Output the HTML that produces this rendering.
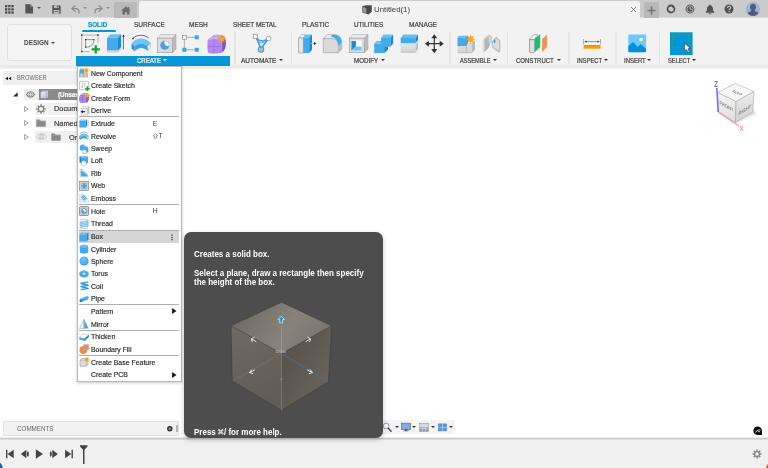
<!DOCTYPE html>
<html>
<head>
<meta charset="utf-8">
<title>Fusion</title>
<style>
*{box-sizing:border-box;margin:0;padding:0}
html,body{width:768px;height:468px;overflow:hidden;background:#fff}
body{font-family:"Liberation Sans",sans-serif;position:relative;color:#333}
#root{position:absolute;left:0;top:0;width:768px;height:468px;will-change:transform}
.abs{position:absolute}
svg{position:absolute;overflow:visible}
.t{position:absolute;white-space:nowrap;line-height:1;transform-origin:left top}
#topbar{left:0;top:0;width:768px;height:18px;background:#cbcbcb}
#hometab{left:114.200px;top:1.700px;width:22.800px;height:16.100px;background:#b9b9b9;border-radius:1.500px 1.500px 0 0}
#doctab{left:139px;top:1.300px;width:501.300px;height:17px;background:#f2f2f2;border-radius:3px 3px 0 0}
#plustab{left:643.500px;top:1.700px;width:15.300px;height:16.100px;background:#b9b9b9;border-radius:1.500px 1.500px 0 0}
#toolbar{left:0;top:17.500px;width:768px;height:48.500px;background:#f2f2f2}
#tbline{left:0;top:65.400px;width:768px;height:4.200px;background:linear-gradient(#ebebeb 0,#e8e8e8 45%,#fff 100%)}
.tab{-webkit-text-stroke:.2px;font-size:7px;color:#3c3c3c;top:21.1px;transform:scaleX(.93)}
.lbl{-webkit-text-stroke:.2px;font-size:6.7px;color:#3c3c3c;top:58px;transform:scaleX(.93)}
.dd{position:absolute;width:0;height:0;border-top:2.7px solid #333;border-left:2px solid transparent;border-right:2px solid transparent}
.vsep{position:absolute;top:32px;width:1.500px;height:31.800px;background:#e5e5e5}
#design{left:7px;top:24px;width:65px;height:37px;border:1px solid #e0e0e0;border-radius:3px;background:#f5f5f5}
#createbar{left:76.200px;top:55.600px;width:154px;height:10.300px;background:#0696d7}
#menu{left:77px;top:66.4px;width:104.6px;height:316px;background:#fff;border:1px solid #b9b9b9;box-shadow:0 1px 3px rgba(0,0,0,.22)}
.mi{-webkit-text-stroke:.18px;position:absolute;left:13.2px;font-size:7.3px;color:#2b2b2b;white-space:nowrap;line-height:1;transform:scaleX(.95);transform-origin:left top}
.ms{position:absolute;left:1px;width:100px;height:1px;background:#adadad}
.mk{position:absolute;font-size:6.8px;color:#3a3a3a;line-height:1}
.ic{left:.8px;width:10px;height:10px}
#tip{left:184px;top:232px;width:198.600px;height:206.300px;background:#4d4d4d;border-radius:7px;box-shadow:0 2px 5px rgba(0,0,0,.22)}
.tt{position:absolute;left:10px;font-size:8.500px;font-weight:bold;color:#fff;white-space:nowrap;line-height:1;transform:scaleX(.94);transform-origin:left top}
#bottombar{left:0;top:437.5px;width:768px;height:31px;background:#f1f1f1;border-top:1px solid #cfcfcf}
#comments{left:2.500px;top:421px;width:176.500px;height:14.5px;background:#f2f2f2;border:1px solid #e2e2e2}
#browserhdr{left:2.5px;top:69px;width:80px;height:16px;background:#f0f0f0}
.br{-webkit-text-stroke:.15px;position:absolute;font-size:6.9px;color:#333;white-space:nowrap;line-height:1}
</style>
</head>
<body><div id="root">
<!-- TOP BAR -->
<div class="abs" id="topbar"></div>
<div class="abs" style="left:0;top:17px;width:768px;height:1px;background:#dedede"></div>
<div class="abs" id="hometab"></div>
<div class="abs" id="doctab"></div>
<div class="abs" id="plustab"></div>
<!-- grid icon -->
<svg style="left:5px;top:5px" width="9" height="9" viewBox="0 0 9 9"><g fill="#4a4a4a"><rect x="0" y="0" width="2.3" height="2.3"/><rect x="3.2" y="0" width="2.3" height="2.3"/><rect x="6.4" y="0" width="2.3" height="2.3"/><rect x="0" y="3.2" width="2.3" height="2.3"/><rect x="3.2" y="3.2" width="2.3" height="2.3"/><rect x="6.4" y="3.2" width="2.3" height="2.3"/><rect x="0" y="6.4" width="2.3" height="2.3"/><rect x="3.2" y="6.4" width="2.3" height="2.3"/><rect x="6.4" y="6.4" width="2.3" height="2.3"/></g></svg>
<!-- file icon -->
<svg style="left:25px;top:4px" width="9" height="10" viewBox="0 0 9 10"><path d="M0.3 0.2h5l2.7 2.8v6.6H0.3z" fill="#555"/><path d="M5.3 0.2v2.8h2.7z" fill="#8a8a8a"/></svg>
<div class="dd" style="left:36.5px;top:7.2px;border-top-color:#555"></div>
<!-- save icon -->
<svg style="left:51.5px;top:4.8px" width="9" height="9" viewBox="0 0 9 9"><path d="M0.3 0.3h7.4l1 1v7.4H0.3z" fill="#555"/><rect x="2" y="0.3" width="4.6" height="2.6" fill="#c4c4c4"/><rect x="4.9" y="0.7" width="1" height="1.7" fill="#555"/><rect x="1.7" y="5" width="5.6" height="3.7" fill="#c4c4c4"/><rect x="2.6" y="6" width="3.8" height="0.8" fill="#555"/></svg>
<!-- undo -->
<svg style="left:70.5px;top:4.5px" width="10" height="9" viewBox="0 0 10 9"><path d="M4 0.8L1 3.6l3 2.6" fill="none" stroke="#8c8c8c" stroke-width="1.3" stroke-linejoin="round" stroke-linecap="round"/><path d="M1.3 3.6h3.5c2.2 0 3.5 1.6 3.2 4.2" fill="none" stroke="#8c8c8c" stroke-width="1.3" stroke-linecap="round"/></svg>
<div class="dd" style="left:83px;top:7.2px;border-top-color:#8c8c8c"></div>
<!-- redo -->
<svg style="left:93px;top:4.5px" width="10" height="9" viewBox="0 0 10 9"><path d="M6 0.8L9 3.6l-3 2.6" fill="none" stroke="#8c8c8c" stroke-width="1.3" stroke-linejoin="round" stroke-linecap="round"/><path d="M8.7 3.6H5.2c-2.2 0-3.5 1.6-3.2 4.2" fill="none" stroke="#8c8c8c" stroke-width="1.3" stroke-linecap="round"/></svg>
<div class="dd" style="left:105.8px;top:7.2px;border-top-color:#8c8c8c"></div>
<!-- home -->
<svg style="left:120.5px;top:5.5px" width="10" height="9" viewBox="0 0 10 9"><path d="M5 0.3L0.2 4.6h1.3v3.9h2.6V6h1.8v2.5h2.6V4.6h1.3z" fill="#6c6c6c"/><rect x="7" y="0.9" width="1.2" height="2.2" fill="#6c6c6c"/></svg>
<!-- doc cube + title -->
<svg style="left:361.5px;top:5.3px" width="10" height="10" viewBox="0 0 10 10"><path d="M0.3 1.2L3.6 0.2h6.2v6.5L6.5 9.5 0.3 7.6z" fill="#4a4a4a"/><path d="M0.9 2.1l3.3 0.9v5.2L0.9 7.1z" fill="#9a9a9a"/></svg>
<div class="t" style="left:373.8px;top:5.8px;font-size:7.6px;color:#3c3c3c;transform:scaleX(1.03)">Untitled(1)</div>
<!-- close x -->
<svg style="left:630px;top:6px" width="7" height="7" viewBox="0 0 7 7"><path d="M1 1l5 5M6 1L1 6" stroke="#666" stroke-width="0.8" fill="none"/></svg>
<!-- plus -->
<svg style="left:647px;top:5.5px" width="9" height="9" viewBox="0 0 9 9"><path d="M4.500 0.600v7.800M0.600 4.500h7.800" stroke="#757575" stroke-width="1.700" fill="none"/></svg>
<!-- extensions -->
<svg style="left:665.5px;top:4.3px" width="10" height="10" viewBox="0 0 10 10"><circle cx="5" cy="5" r="4.4" fill="#525252"/><circle cx="5" cy="5" r="2.6" fill="#cbcbcb"/><path d="M5.5 2.2L8 1.6l-0.8 2.6z" fill="#525252"/><path d="M4.5 7.8L2 8.4l0.8-2.6z" fill="#525252"/></svg>
<!-- clock -->
<svg style="left:685px;top:4.3px" width="10" height="10" viewBox="0 0 10 10"><circle cx="5" cy="5" r="4.4" fill="#525252"/><circle cx="5" cy="5" r="3.2" fill="none" stroke="#cbcbcb" stroke-width="0.8"/><path d="M5 3v2.2h1.8" stroke="#cbcbcb" stroke-width="0.9" fill="none"/></svg>
<!-- bell -->
<svg style="left:704.5px;top:4px" width="10" height="11" viewBox="0 0 10 11"><path d="M5 0.6c0.5 0 0.8 0.3 0.8 0.8 1.5 0.5 2.2 1.7 2.2 3.4 0 1.7 0.5 2.5 1.3 3.2v0.7H0.7V8c0.8-0.7 1.3-1.5 1.3-3.2 0-1.7 0.7-2.9 2.2-3.4 0-0.5 0.3-0.8 0.8-0.8z" fill="#525252"/><path d="M3.8 9.3h2.4c0 0.7-0.5 1.2-1.2 1.2s-1.2-0.5-1.2-1.2z" fill="#525252"/></svg>
<!-- help -->
<svg style="left:724px;top:4.3px" width="10" height="10" viewBox="0 0 10 10"><circle cx="5" cy="5" r="4.5" fill="#525252"/><path d="M3.5 3.9c0-1 0.7-1.6 1.6-1.6s1.6 0.6 1.6 1.4c0 1.2-1.6 1.2-1.6 2.4" fill="none" stroke="#cbcbcb" stroke-width="1.1"/><rect x="4.5" y="6.8" width="1.2" height="1.2" fill="#cbcbcb"/></svg>
<!-- avatar -->
<svg style="left:745.800px;top:1.700px" width="14" height="14" viewBox="0 0 14 14"><defs><clipPath id="avc"><circle cx="7" cy="7" r="6.900"/></clipPath><radialGradient id="avg" cx="0.5" cy="0.4" r="0.7"><stop offset="0" stop-color="#b4c6df"/><stop offset="1" stop-color="#8aa3c6"/></radialGradient></defs><circle cx="7" cy="7" r="6.900" fill="url(#avg)"/><g clip-path="url(#avc)" fill="#4a5f82"><path d="M7 1.800c1.900 0 3 1.300 3 3.300c0 1.300-.4 2.500-1.100 3.200v1c2.300.4 4 1.500 4.300 4.700H.8c.3-3.200 2-4.300 4.300-4.700v-1C4.400 7.600 4 6.400 4 5.100c0-2 1.100-3.300 3-3.300z"/></g></svg>
<!-- TOOLBAR -->
<div class="abs" id="toolbar"></div>
<div class="abs" id="tbline"></div>
<div class="abs" id="design"></div>
<div class="t" style="left:24.3px;top:40px;font-size:6.9px;font-weight:bold;color:#444;transform:scaleX(.93)">DESIGN</div>
<div class="dd" style="left:51.200px;top:41.500px;border-top-color:#444"></div>
<div class="t tab" style="left:88.3px;color:#0696d7;font-weight:bold;transform:scaleX(.9)">SOLID</div>
<div class="abs" style="left:81.7px;top:30.4px;width:34.2px;height:1.800px;background:#0696d7;border-radius:1px"></div>
<div class="t tab" style="left:134px">SURFACE</div>
<div class="t tab" style="left:189px">MESH</div>
<div class="t tab" style="left:232.5px;transform:scaleX(.91)">SHEET METAL</div>
<div class="t tab" style="left:302px">PLASTIC</div>
<div class="t tab" style="left:354.2px;transform:scaleX(.89)">UTILITIES</div>
<div class="t tab" style="left:409px">MANAGE</div>
<div class="abs" id="createbar"></div>
<div class="t lbl" style="left:137.3px;color:#fff;transform:scaleX(.9)">CREATE</div><div class="dd" style="left:162.6px;top:59px;border-top-color:#fff"></div>
<div class="t lbl" style="left:241px;transform:scaleX(.97)">AUTOMATE</div><div class="dd" style="left:278.5px;top:59px"></div>
<div class="t lbl" style="left:354.3px">MODIFY</div><div class="dd" style="left:380.5px;top:59px"></div>
<div class="t lbl" style="left:460px;transform:scaleX(.845)">ASSEMBLE</div><div class="dd" style="left:492.8px;top:59px"></div>
<div class="t lbl" style="left:515.8px;transform:scaleX(.9)">CONSTRUCT</div><div class="dd" style="left:556.5px;top:59px"></div>
<div class="t lbl" style="left:576.8px;transform:scaleX(.865)">INSPECT</div><div class="dd" style="left:604.3px;top:59px"></div>
<div class="t lbl" style="left:623.6px;transform:scaleX(.89)">INSERT</div><div class="dd" style="left:647px;top:59px"></div>
<div class="t lbl" style="left:667.7px;transform:scaleX(.855)">SELECT</div><div class="dd" style="left:692px;top:59px"></div>
<div class="vsep" style="left:234px"></div>
<div class="vsep" style="left:290.5px"></div>
<div class="vsep" style="left:449.3px"></div>
<div class="vsep" style="left:506.5px"></div>
<div class="vsep" style="left:568.3px"></div>
<div class="vsep" style="left:615px"></div>
<div class="vsep" style="left:658.5px"></div>
<!-- toolbar icons: one big svg overlay in page coordinates (offset 0,30) -->
<svg style="left:0;top:30px" width="768" height="28" viewBox="0 30 768 28">
<defs>
<radialGradient id="stargl" cx=".5" cy=".5" r=".5"><stop offset="0" stop-color="#ffb000"/><stop offset="1" stop-color="#ff8f00"/></radialGradient>
<linearGradient id="grayf" x1="0" y1="0" x2="0" y2="1"><stop offset="0" stop-color="#e3e3e3"/><stop offset="1" stop-color="#cfcfcf"/></linearGradient>
<linearGradient id="purp" x1="0" y1="0" x2="1" y2="1"><stop offset="0" stop-color="#c9a6f2"/><stop offset="1" stop-color="#8a4fd0"/></linearGradient>
</defs>
<!-- 1 create sketch -->
<g fill="none" stroke="#555" stroke-width=".7">
<path d="M81.7 35V51.6M81.7 35H98M98 35v8M81.7 51.6h8" stroke="#8a8a8a" stroke-width=".6"/>
<path d="M85.6 39.6H94M85.6 39.6v7.6M94 39.6c0 4.5-3.5 7.6-8.4 7.6" stroke="#666"/>
</g>
<g fill="#3a3a3a"><rect x="81" y="34.3" width="1.5" height="1.5"/><rect x="97.2" y="34.3" width="1.5" height="1.5"/><rect x="81" y="50.8" width="1.5" height="1.5"/><rect x="85" y="39" width="1.2" height="1.2"/><rect x="93.3" y="39" width="1.2" height="1.2"/><rect x="85" y="46.5" width="1.2" height="1.2"/></g>
<path d="M94.6 45.2h2.3v3h3v2.3h-3v3h-2.3v-3h-3v-2.3h3z" fill="#12a538"/>
<!-- 2 extrude -->
<path d="M106.5 50.3h11.6l3-3.2v2.3l-3 3.2H106.5z" fill="#d2d2d2"/>
<path d="M107 37.8h11v12.5h-11z" fill="#45aaea"/>
<path d="M107 37.8l3.5-3.5h10.6l-3.1 3.5z" fill="#62bff6"/>
<path d="M118 37.8l3.1-3.5v12.8l-3.1 3.2z" fill="#1b8ad4"/>
<path d="M123.450 36v13.500" stroke="#3a3a3a" stroke-width=".7"/><path d="M123.450 34.300l1.200 2.400h-2.400z" fill="#222"/>
<!-- 3 revolve -->
<path d="M133 38.2c4-3.8 11.5-3.8 15.5-.2" fill="none" stroke="#333" stroke-width=".7"/><path d="M131.8 39.2l2.3-.3-1.1-1.7z" fill="#222"/>
<path d="M131.7 43.3c3-3.6 6.2-4.8 9.3-4.8s6.800 1.200 9.200 4.300l-2.700 3.500c-2-1.900-4.100-2.700-6.500-2.700s-4.500 0.800-6.600 2.900z" fill="#6cc4fa"/>
<path d="M131.700 43.300l2.700 3.200v5l-2.700-3.200z" fill="#1f8dd6"/>
<path d="M134.400 46.500c2.100-2.100 4.200-2.900 6.600-2.900s4.500 0.800 6.500 2.700v4.400c-2-1.900-4.100-2.700-6.500-2.700s-4.500 1.200-6.600 3.500z" fill="#3aa2e6"/>
<path d="M147.500 46.300l2.700-3.500v4.800l-2.700 3.100z" fill="#fff" stroke="#8a8a8a" stroke-width=".6"/>
<!-- 4 hole -->
<path d="M157.400 38.200l3.300-3.600h15.300l-3.600 3.600z" fill="#e9e9e9" stroke="#9b9b9b" stroke-width=".5"/>
<path d="M172.400 38.200l3.600-3.600v14.400l-3.600 3.700z" fill="#bdbdbd" stroke="#9b9b9b" stroke-width=".5"/>
<rect x="157.400" y="38.200" width="15" height="14.500" fill="#dcdcdc" stroke="#9b9b9b" stroke-width=".6"/>
<circle cx="164.800" cy="45.300" r="4.800" fill="#b9b9b9"/>
<circle cx="164.800" cy="45.300" r="4.200" fill="#3da2e8"/>
<path d="M164.800 41.100a4.200 4.200 0 0 1 4.200 4.200c-1.200 1-2.600.8-3.600-.3c-1-1.100-1.400-2.500-.6-3.900z" fill="#fff"/>
<!-- 5 rect pattern -->
<path d="M184.300 37.300h12.500M184.300 37.300v12.500M184.300 49.800h12.500" fill="none" stroke="#777" stroke-width=".6"/>
<rect x="182.400" y="35.400" width="3.800" height="3.800" fill="#fff" stroke="#777" stroke-width=".6"/>
<rect x="194.800" y="35.300" width="4" height="4" fill="#3aa5e8"/>
<rect x="182.300" y="47.800" width="4" height="4" fill="#3aa5e8"/>
<rect x="194.800" y="47.800" width="4" height="4" fill="#3aa5e8"/>
<!-- 6 form -->
<path d="M209.500 39.500c1.500-3 4.500-4.700 8-4.700l5 .8c2.300 1.500 3.500 4 3.500 7.400c0 4.500-1.300 7.600-3.800 9.200l-1.700.8z" fill="#8451c8"/>
<path d="M209.500 39.500c1.500-3 4.500-4.700 8-4.700l5 .8l-2.200 3.400z" fill="#c9a8f4"/>
<rect x="207.500" y="38" width="13.800" height="15.500" rx="3.500" fill="#b389ee"/>
<path d="M208.500 39.800c2.500-1.600 8.500-1.800 11.500-.3" stroke="#dcc8fa" stroke-width=".9" fill="none"/>
<path d="M213.800 38.300v15M207.600 46.500h13.600" stroke="#9663d6" stroke-width=".6" fill="none"/>
<path d="M221.600 42c.3 3.500.3 7 0 10" stroke="#e6d8fb" stroke-width=".5" fill="none"/>
<g transform="translate(221.700 39.100)"><path d="M0-4.800L.9-2.100 3.400-3.400 2.100-.9 4.800 0 2.100.9 3.400 3.400.9 2.100 0 4.800-.9 2.100-3.400 3.400-2.100.9-4.800 0-2.100-.9-3.400-3.400-.9-2.100z" fill="#ff9a0a"/><circle r="2.500" fill="#ffa50e"/></g>
<!-- automate -->
<g fill="none" stroke="#3c9fdc" stroke-width="1.700" stroke-linecap="round"><path d="M256.200 37.500l4.300 9.800"/><path d="M267.300 40l-5.500 7.500"/><path d="M256.800 38.500c2.500 2.600 6.500 3 9.500 1.200"/><path d="M259.300 42.300h4.400" stroke-width=".9"/></g>
<rect x="253.200" y="34.200" width="4" height="4.300" fill="#fff" stroke="#777" stroke-width=".6"/>
<circle cx="268.600" cy="38.500" r="2.300" fill="#fff" stroke="#777" stroke-width=".6"/>
<circle cx="261" cy="49.600" r="2.700" fill="#cfcfcf" stroke="#3c9fdc" stroke-width="1.100"/>
<circle cx="261" cy="49.600" r="1.200" fill="none" stroke="#888" stroke-width=".5"/>
<!-- press pull -->
<path d="M298.700 38l3-3.400h3.800l-2.500 3.400z" fill="#f4f4f4" stroke="#8d8d8d" stroke-width=".5"/>
<rect x="298.700" y="38" width="4.500" height="15" fill="#e6e6e6" stroke="#8d8d8d" stroke-width=".6"/>
<path d="M303.200 37.800h6v15.300h-6z" fill="#45aaea"/>
<path d="M303.200 37.800l2.500-3.400h6.300l-2.800 3.400z" fill="#62bff6"/>
<path d="M309.200 37.800l2.800-3.400v15.300l-2.800 3.400z" fill="#1b8ad4"/>
<path d="M310.500 43.500h4" stroke="#bbb" stroke-width=".9"/><path d="M316.400 43.500l-2.300-1.400v2.800z" fill="#222"/>
<!-- fillet -->
<path d="M323.300 38.600l3.600-4h7c5 0 8 3.600 8 8v6.300l-3.600 3.800z" fill="#e9e9e9" stroke="#9b9b9b" stroke-width=".5"/>
<path d="M323.300 38.600h8.500c4 0 6.500 2.800 6.500 6.500v7.600h-15z" fill="#dadada" stroke="#9b9b9b" stroke-width=".6"/>
<path d="M338.300 45.100l3.600-2.500v6.300l-3.600 3.800z" fill="#bdbdbd"/>
<path d="M330.800 36.500c1-1.300 2-1.900 3.100-1.900c5 0 8 3.600 8 8l-3.600 3.200c0-4.500-2.800-8.300-7.500-9.300z" fill="#45aaea"/>
<!-- shell -->
<path d="M349.300 38.200l3.400-3.600h15.200l-3.500 3.600z" fill="#ededed" stroke="#9b9b9b" stroke-width=".5"/>
<path d="M364.400 38.200l3.500-3.600v14.500l-3.500 3.600z" fill="#bdbdbd" stroke="#9b9b9b" stroke-width=".5"/>
<rect x="349.300" y="38.200" width="15.100" height="14.500" fill="#dcdcdc" stroke="#9b9b9b" stroke-width=".6"/>
<rect x="351.400" y="40.600" width="10.200" height="10" fill="#fff"/>
<path d="M351.400 41h4.500v5.600l-4.500 4z" fill="#1b8ad4"/>
<path d="M355.900 46.600h5.700v4h-10.200z" fill="#6cc4fa"/>
<!-- combine -->
<path d="M381 38l2.500-3.400h9.600l-2.600 3.400z" fill="#62bff6"/>
<path d="M381 38h9.500v8.700H381z" fill="#45aaea"/>
<path d="M390.500 38l2.600-3.400v9l-2.600 3.100z" fill="#1b8ad4"/>
<path d="M374.200 43.600l2.300-2.600h5v2.600z" fill="#62bff6"/>
<path d="M374.200 43.600h10.400v9.500h-10.400z" fill="#45aaea"/>
<path d="M384.600 46.700h3.400l-3.400 6.400z" fill="#1b8ad4"/><path d="M384.600 46.700h3.400v2.800l-3.400 3.600z" fill="#1b8ad4"/>
<!-- split body -->
<path d="M400.700 38l2.500-3.400h14.800l-2.500 3.400z" fill="#62bff6"/>
<path d="M400.700 38h14.800v5.300h-14.800z" fill="#45aaea"/>
<path d="M415.500 38l2.500-3.400v5.300l-2.500 3.400z" fill="#1b8ad4"/>
<path d="M399.500 45l3-.0h13l3-3.800" fill="none" stroke="#8fd0fa" stroke-width=".8"/>
<path d="M400.700 45.700h14.800v6.600h-14.800z" fill="url(#grayf)"/>
<path d="M415.500 45.700l2.500-3.200v6.600l-2.500 3.200z" fill="#bdbdbd"/>
<path d="M400.700 52.300h14.800" stroke="#aaa" stroke-width=".5"/>
<!-- move -->
<g fill="#333"><path d="M434.300 34.200l3 4.100h-6z"/><path d="M434.300 53.200l3-4.100h-6z"/><path d="M424.900 43.700l4.100-3v6z"/><path d="M443.800 43.700l-4.100-3v6z"/></g>
<path d="M434.300 37.500v12.500M428 43.700h12.500" stroke="#333" stroke-width="1.200"/>
<!-- new component -->
<path d="M457.500 46h9v-3.300h6l2.500-2.400v9.500l-3 3H457.500z" fill="#d8d8d8"/>
<path d="M466.500 42.700h5.500l2.800-2.500h-5.800z" fill="#f0f0f0"/>
<path d="M472 42.700l3-2.400v9.500l-3 3z" fill="#bcbcbc"/>
<path d="M457.500 52.800h14.500M466.300 46v6.800" stroke="#9a9a9a" stroke-width=".5" fill="none"/>
<path d="M457.500 37.300h8.800v8.700h-8.800z" fill="#45aaea"/>
<path d="M457.500 37.300l1.700-1.600h8.600l-1.500 1.600z" fill="#62bff6"/>
<path d="M466.300 37.300l1.500-1.600v7l-1.500 3.300z" fill="#1b8ad4"/>
<g transform="translate(470.700 39.200)"><path d="M0-4.800L.9-2.100 3.400-3.400 2.100-.9 4.800 0 2.100.9 3.400 3.400.9 2.100 0 4.800-.9 2.100-3.400 3.400-2.100.9-4.800 0-2.100-.9-3.400-3.400-.9-2.100z" fill="#ff9a0a"/><circle r="2.300" fill="#ffab10"/></g>
<!-- joint -->
<path d="M483.200 40.200L488.500 35.300l3 .9v6.300l-3.300.7v4.800l-4 3.800-1-.6z" fill="#c6c6c6" stroke="#9a9a9a" stroke-width=".4"/>
<path d="M483.200 40.200l1.400.8v10.600l-1.400-.4z" fill="#e4e4e4"/>
<path d="M484.600 41l4.200-3.900v10.500l-4.200 4z" fill="#b4b4b4"/>
<path d="M488.500 35.300l3 .9v6.300l-2.700.6z" fill="#d4d4d4"/>
<rect x="488.500" y="43.300" width="1.500" height="2.800" fill="#7cc4f5"/>
<path d="M492.300 41.500L496 37l4 3.500v11l-1.200.7-6.500-4.700z" fill="#c9c9c9" stroke="#9a9a9a" stroke-width=".4"/>
<path d="M493.300 42.200l2.800-3.400 2.900 2.500v9l-5.700-3.900z" fill="#dedede"/>
<ellipse cx="494.600" cy="41.300" rx=".75" ry="2" fill="#2d8fe0"/>
<!-- construct -->
<path d="M529.500 39.600l4.500-5h3.500l-3 5z" fill="#f6f6f6" stroke="#777" stroke-width=".5"/>
<path d="M529.500 39.600h5v12.200c0 .6-.3.900-.9.900h-3.200c-.6 0-.9-.3-.9-.9z" fill="#dedede" stroke="#777" stroke-width=".6"/>
<path d="M534.900 38.600l5.300-4.300v12.600l-5.300 5.200z" fill="#10c272"/>
<path d="M542 39.200l5-4.800v12.600l-5 5.200z" fill="#f0935a"/>
<!-- inspect -->
<path d="M583.600 39v5.300M600.500 39v5.300" stroke="#888" stroke-width=".7"/>
<path d="M585.500 41.600h13" stroke="#555" stroke-width=".6"/>
<path d="M584.300 41.600l2.300-1.100v2.200zM599.800 41.600l-2.300-1.100v2.200z" fill="#444"/>
<rect x="583.600" y="45" width="17" height="3.700" fill="#f79d00"/>
<path d="M585.500 45v1.400M587.500 45v1M589.500 45v1.400M591.500 45v1M593.500 45v1.400M595.500 45v1M597.500 45v1.400M599.300 45v1" stroke="#c77400" stroke-width=".6"/>
<!-- insert -->
<rect x="628.300" y="34.400" width="17.800" height="17.800" rx="1.200" fill="#6bc9ff"/>
<path d="M628.300 52.200v-6l4.700-4.300 4.700 5 3-2.800 5.400 4.800v2.100c0 .7-.5 1.200-1.200 1.200h-15.400c-.7 0-1.200-.5-1.200-1.200z" fill="#0a8fd4"/>
<circle cx="641" cy="39.600" r="1.800" fill="#fdf7b2"/>
<!-- select -->
<rect x="670" y="32.300" width="22.600" height="22.800" fill="#0696d7"/>
<rect x="672.600" y="34.700" width="15.700" height="12.800" fill="none" stroke="#1db35c" stroke-width="1.100" stroke-dasharray="1.600 1.400"/>
<path d="M684.600 43.300v7.600l1.900-1.600 1.400 3.300 1.500-.7-1.400-3.200 2.500-.2z" fill="#fff" stroke="#333" stroke-width=".6" stroke-linejoin="round"/>
</svg>
<!-- BROWSER -->
<div class="abs" id="browserhdr" style="top:70.5px;height:14.8px"></div>
<svg style="left:5px;top:75.700px" width="7" height="5" viewBox="0 0 7 5"><path d="M3 0.700v3.600L0.200 2.500zM6.200 0.700v3.600L3.400 2.500z" fill="#222"/></svg>
<div class="t" style="left:17.3px;top:75.300px;font-size:6.6px;color:#6a6a6a;transform:scaleX(.87)">BROWSER</div>
<!-- row 1 -->
<div class="abs" style="left:23.500px;top:89px;width:15px;height:10.500px;background:#eeeeee"></div>
<div class="abs" style="left:38.500px;top:89px;width:45px;height:10.500px;background:#8b8b8b"></div>
<svg style="left:13px;top:92.200px" width="5" height="5" viewBox="0 0 5 5"><path d="M4.600 0.200v4.400H0.200z" fill="#222"/></svg>
<svg style="left:25.500px;top:91px" width="9" height="7" viewBox="0 0 9 7"><path d="M0.400 3.500C1.500 1.500 3 0.800 4.500 0.800S7.500 1.500 8.600 3.500C7.500 5.500 6 6.200 4.500 6.200S1.500 5.500 0.400 3.500z" fill="none" stroke="#808080" stroke-width="1.100"/><circle cx="4.500" cy="3.500" r="1.600" fill="none" stroke="#808080" stroke-width=".9"/></svg>
<svg style="left:40px;top:89.800px" width="9" height="9" viewBox="0 0 9 9"><defs><linearGradient id="cmpg" x1="0" y1="0" x2="1" y2="1"><stop offset="0" stop-color="#f4f6fa"/><stop offset="1" stop-color="#b4bccb"/></linearGradient></defs><path d="M1.800 1.200L3 0.300h5.300v6.300L7 8.500H1.200c-.5 0-.8-.3-.8-.8V2.200z" fill="#d5dae4" stroke="#6d7480" stroke-width=".5"/><rect x="0.700" y="1.800" width="6" height="6.500" rx=".8" fill="url(#cmpg)" stroke="#7d8490" stroke-width=".4"/></svg>
<div class="t br" style="left:58.200px;top:92.200px;color:#fff;font-weight:bold;transform:scaleX(.92)">(Unsaved)</div>
<!-- row 2 -->
<div class="abs" style="left:34.500px;top:103px;width:48px;height:11.500px;background:#f0f0f0"></div>
<svg style="left:24.300px;top:105.700px" width="5" height="6" viewBox="0 0 5 6"><path d="M0.600 0.500L4.200 3 0.600 5.500z" fill="#fff" stroke="#666" stroke-width=".6"/></svg>
<svg style="left:36px;top:104px" width="10" height="10" viewBox="0 0 10 10"><g transform="translate(5 5)"><g fill="#858585"><rect x="-0.750" y="-4.700" width="1.500" height="9.400"/><rect x="-0.750" y="-4.700" width="1.500" height="9.400" transform="rotate(45)"/><rect x="-0.750" y="-4.700" width="1.500" height="9.400" transform="rotate(90)"/><rect x="-0.750" y="-4.700" width="1.500" height="9.400" transform="rotate(135)"/></g><circle r="3.200" fill="#858585"/><circle r="2.100" fill="#f0f0f0"/></g></svg>
<div class="t br" style="left:54px;top:106.400px;transform:scaleX(1.07)">Document Settings</div>
<!-- row 3 -->
<div class="abs" style="left:34.500px;top:117px;width:48px;height:11.300px;background:#f3f3f3"></div>
<svg style="left:24.300px;top:119.700px" width="5" height="6" viewBox="0 0 5 6"><path d="M0.600 0.500L4.200 3 0.600 5.500z" fill="#fff" stroke="#666" stroke-width=".6"/></svg>
<svg style="left:36px;top:118.500px" width="10" height="8" viewBox="0 0 10 8"><path d="M0.300 0.500h3.400l.8 1.300h5.200v5.900H0.300z" fill="#8a8a8a"/><path d="M0.300 2.300h9.400" stroke="#a8a8a8" stroke-width=".5"/></svg>
<div class="t br" style="left:54px;top:120.700px;transform:scaleX(1.07)">Named Views</div>
<!-- row 4 -->
<div class="abs" style="left:34.500px;top:131px;width:48px;height:11.500px;background:#f0f0f0"></div>
<svg style="left:24.300px;top:133.600px" width="5" height="6" viewBox="0 0 5 6"><path d="M0.600 0.500L4.200 3 0.600 5.500z" fill="#fff" stroke="#666" stroke-width=".6"/></svg>
<svg style="left:35.500px;top:133.300px" width="11" height="7" viewBox="0 0 11 7"><path d="M0.500 3.500C1.800 1.500 3.500 0.800 5.500 0.800S9.200 1.500 10.500 3.500C9.200 5.500 7.500 6.200 5.500 6.200S1.800 5.500 0.500 3.500z" fill="none" stroke="#b3b3b3" stroke-width=".8"/><circle cx="5.500" cy="3.500" r="1.800" fill="none" stroke="#b3b3b3" stroke-width=".8"/><path d="M2.500 6.300l6-5.600" stroke="#c0c0c0" stroke-width=".6"/></svg>
<svg style="left:51px;top:132.500px" width="10" height="8" viewBox="0 0 10 8"><path d="M0.300 0.500h3.400l.8 1.300h5.200v5.900H0.300z" fill="#8a8a8a"/><path d="M0.300 2.300h9.400" stroke="#a8a8a8" stroke-width=".5"/></svg>
<div class="t br" style="left:68.500px;top:134.900px;transform:scaleX(1.07)">Origin</div>
<!-- COMMENTS / BOTTOM -->
<div class="abs" id="comments"></div>
<div class="t" style="left:16.900px;top:426.200px;font-size:6.6px;color:#666;transform:scaleX(.95)">COMMENTS</div>
<svg style="left:167px;top:426.200px" width="6" height="6" viewBox="0 0 6 6"><circle cx="2.800" cy="2.800" r="2.700" fill="#2b2b2b"/><path d="M2.800 1.200v3.200M1.200 2.800h3.200" stroke="#d8d8d8" stroke-width=".6"/></svg>
<div class="abs" style="left:176.200px;top:424.800px;width:1.400px;height:7.500px;background:#b5b5b5"></div>
<!-- nav bar -->
<div class="abs" style="left:380px;top:420.300px;width:75px;height:14px;background:#f4f4f4"></div>
<svg style="left:380px;top:420px" width="76" height="15" viewBox="380 420 76 15">
<circle cx="386.100" cy="426" r="2.900" fill="#eef3f8" stroke="#7d8791" stroke-width=".8"/>
<path d="M388.300 428.300l2.800 3" stroke="#3b3b3b" stroke-width="1.300" stroke-linecap="round"/>
<rect x="401.600" y="423.200" width="9" height="6.300" fill="#7eabe3" stroke="#6b6b6b" stroke-width=".7"/>
<path d="M405.200 429.600h1.800v1h-1.800zM403.500 430.800h5.200" stroke="#555" stroke-width=".7" fill="#555"/>
<rect x="419.700" y="423.200" width="8.800" height="8.200" fill="#c9d2e0" stroke="#8a8a8a" stroke-width=".5"/>
<path d="M419.700 427.300h8.800v4.100h-8.800z" fill="#8e9bb3"/>
<path d="M422.600 423.200v8.200M425.500 423.200v8.200M419.700 425.900h8.800M419.700 428.600h8.800" stroke="#f1f1f1" stroke-width=".5"/>
<rect x="438.400" y="423.900" width="8.200" height="7" fill="#5d96dc" stroke="#3f78c4" stroke-width=".5"/>
<path d="M442.500 423.900v7M438.400 427.400h8.200" stroke="#cfe0f5" stroke-width=".6"/>
</svg>
<div class="dd" style="left:394.500px;top:426.200px"></div>
<div class="dd" style="left:412.300px;top:426.200px"></div>
<div class="dd" style="left:430.500px;top:426.200px"></div>
<div class="dd" style="left:448.800px;top:426.200px"></div>
<!-- bottom bar -->
<div class="abs" style="left:0;top:437.300px;width:768px;height:2.700px;background:linear-gradient(#fff 0,#cdcdcd 45%,#c9c9c9 65%,#f0f0f0 100%)"></div>
<div class="abs" id="bottombar" style="top:440px;border-top:none;height:28px;background:#f0f0f0"></div>
<svg style="left:0;top:440px" width="100" height="28" viewBox="0 440 100 28">
<g fill="#444">
<path d="M6 449.800h1.400v8.400H6zM13.700 449.800v8.400L7.600 454z"/>
<path d="M26.400 449.800v8.400L20.800 454z"/><ellipse cx="27.900" cy="454" rx="1" ry="2.700"/>
<path d="M35.800 449.200v9.600L43 454z"/>
<path d="M52.300 449.800v8.400L57.900 454z"/><ellipse cx="50.800" cy="454" rx="1" ry="2.700"/>
<path d="M72.900 449.800h-1.400v8.400h1.400zM65.100 449.800v8.400l6.100-4.200z"/>
<path d="M80 445.300h7.500v1.300l-3 3.200v14.300h-1.500v-14.300l-3-3.200z"/>
</g>
</svg>
<!-- corner bits -->
<svg style="left:0;top:460px" width="5" height="8" viewBox="0 0 5 8"><path d="M0 2.500C1.300 4 2.500 6 2.800 8H0z" fill="#1d5fa6"/></svg>
<svg style="left:763px;top:460px" width="5" height="8" viewBox="0 0 5 8"><path d="M5 4C4 5 3.200 6.500 3 8h2z" fill="#d2601f"/></svg>
<!-- gear -->
<svg style="left:751.700px;top:449.100px" width="10" height="10" viewBox="0 0 10 10"><g transform="translate(5 5)"><g fill="#8a8a8a"><rect x="-0.800" y="-4.500" width="1.600" height="9"/><rect x="-0.800" y="-4.500" width="1.600" height="9" transform="rotate(45)"/><rect x="-0.800" y="-4.500" width="1.600" height="9" transform="rotate(90)"/><rect x="-0.800" y="-4.500" width="1.600" height="9" transform="rotate(135)"/></g><circle r="3.100" fill="#8a8a8a"/><circle r="1.700" fill="#f0f0f0"/></g></svg>
<!-- autodesk-ish badge -->
<svg style="left:752.500px;top:425.500px" width="10" height="10" viewBox="0 0 10 10"><path d="M4.500 0.500C7 0.500 9 2.400 9 4.800V9H4.500C2 9 0.300 7.100 0.300 4.800S2 0.500 4.500 0.500z" fill="#0a0a0a"/><path d="M2.300 6.300L5 4h2.500M4.800 5.700H7" stroke="#fff" stroke-width=".8" fill="none"/></svg>
<!-- viewcube -->
<svg style="left:700px;top:70px" width="68" height="60" viewBox="700 70 68 60">
<defs><linearGradient id="vcf" x1="0" y1="0" x2="0" y2="1"><stop offset="0" stop-color="#f4f4f4"/><stop offset="1" stop-color="#dedede"/></linearGradient>
<linearGradient id="vcr" x1="0" y1="0" x2="0" y2="1"><stop offset="0" stop-color="#ececec"/><stop offset="1" stop-color="#d2d2d2"/></linearGradient>
<filter id="vblur"><feGaussianBlur stdDeviation="1.200"/></filter></defs>
<path d="M716 110l19 13 21-9-4-6z" fill="#b5b5b5" opacity=".5" filter="url(#vblur)"/>
<path d="M717.500 92.500L735.500 83.500 754 91.500 736 101.500z" fill="#f7f7f7" stroke="#9c9c9c" stroke-width=".5"/>
<path d="M717.500 92.500L736 101.500 735.500 122.500 718.300 111.500z" fill="url(#vcf)" stroke="#9c9c9c" stroke-width=".5"/>
<path d="M736 101.500L754 91.500 752.800 112 735.500 122.500z" fill="url(#vcr)" stroke="#9c9c9c" stroke-width=".5"/>
<path d="M716.800 88L718.200 112" stroke="#7476f0" stroke-width="1.600"/>
<path d="M718.500 112.200L739 126" stroke="#f29a9a" stroke-width="1.200"/>
<text transform="translate(739.500 130.900) scale(.8 1)" font-family="Liberation Sans, sans-serif" font-size="7.400" font-weight="bold" fill="#f28d8d">X</text>
<text transform="translate(714 86.900) scale(.78 1)" font-family="Liberation Sans, sans-serif" font-size="8.600" font-weight="bold" fill="#7a7cf2">Z</text>
<text transform="matrix(.88 .38 -.75 .4 730.500 91.500)" font-family="Liberation Sans, sans-serif" font-size="5.300" fill="#5a5a5a">TOP</text>
<text transform="matrix(.82 .46 0 1 719.500 104)" font-family="Liberation Sans, sans-serif" font-size="5" fill="#5a5a5a">FRONT</text>
<text transform="matrix(.82 -.5 0 1 738.500 115.500)" font-family="Liberation Sans, sans-serif" font-size="5" fill="#5a5a5a">RIGHT</text>
</svg>
<!-- MENU -->
<div class="abs" id="menu">
<svg class="ic" style="top:1.1px" viewBox="0 0 10 10"><rect x="0.500" y="5" width="8" height="4" fill="#d2d2d2" stroke="#8a8a8a" stroke-width=".5"/><path d="M4.500 5v4M0.500 7h8" stroke="#9a9a9a" stroke-width=".4"/><rect x="4.800" y="3.300" width="3.700" height="1.700" fill="#e6e6e6"/><rect x="0.500" y="1.200" width="4.500" height="4" fill="#45aaea"/><path d="M0.500 1.200l.8-.7h4.500l-.8.700z" fill="#62bff6"/><g transform="translate(7.3 2.5) scale(1.2)"><path d="M0-2.600L.5-1.200 1.800-1.800 1.200-.5 2.600 0 1.200.5 1.800 1.800.5 1.200 0 2.600-.5 1.200-1.800 1.800-1.200.5-2.600 0-1.200-.5-1.800-1.800-.5-1.200z" fill="#ff9a0a"/><circle r="1.400" fill="#ffa50e"/></g></svg>
<div class="mi" style="top:2.3px">New Component</div>
<svg class="ic" style="top:13.6px" viewBox="0 0 10 10"><path d="M0.500 0.400h9.200v8.400h-9.200z" fill="#fcfcfc" stroke="#8c8c8c" stroke-width=".6" stroke-dasharray="2 .5"/><path d="M3.200 2.600h3M3.200 2.600v3.600M6.200 2.600c0 2-1.200 3.600-3 3.600" stroke="#777" stroke-width=".5" fill="none" stroke-dasharray=".9 .5"/><path d="M7.600 5.300h1.600v1.600h1.600v1.600H9.200v1.600H7.600V8.500H6V6.900h1.600z" fill="#16a83e"/></svg>
<div class="mi" style="top:14.8px">Create Sketch</div>
<svg class="ic" style="top:26.0px" viewBox="0 0 10 10"><g transform="translate(-.2 -.3) scale(1.07)"><path d="M1.200 2.600c.8-1.500 2.500-2.200 4.500-2.200l2.300.5c1 .8 1.500 2 1.500 3.600c0 2.300-.6 3.800-1.800 4.600L6.800 9.500z" fill="#8a55cc"/><path d="M1.200 2.600c.8-1.500 2.500-2.200 4.500-2.200l2.300.5L6.800 2.500z" fill="#c3a0f2"/><rect x="0.300" y="2.300" width="6.700" height="7.300" rx="1.800" fill="#ae80ea"/><path d="M3.600 2.300v7.300M0.300 6h6.700" stroke="#9966d8" stroke-width=".4"/></g><g transform="translate(8 2.4) scale(1.2)"><path d="M0-2.600L.5-1.200 1.800-1.800 1.200-.5 2.600 0 1.200.5 1.800 1.800.5 1.200 0 2.600-.5 1.200-1.800 1.800-1.200.5-2.600 0-1.200-.5-1.800-1.800-.5-1.200z" fill="#ff9a0a"/><circle r="1.400" fill="#ffa50e"/></g></svg>
<div class="mi" style="top:27.2px">Create Form</div>
<svg class="ic" style="top:38.5px" viewBox="0 0 10 10"><path d="M2 2.800l1.800-2h6.300l-1.500 2z" fill="#fafafa" stroke="#a5a5a5" stroke-width=".4"/><path d="M8.600 2.800l1.500-2v6.200l-1.500 2.200z" fill="#c4c4c4" stroke="#a5a5a5" stroke-width=".4"/><rect x="2" y="2.800" width="6.600" height="6.400" fill="#efefef" stroke="#a5a5a5" stroke-width=".4"/><path d="M3.500 5.700h2.600" stroke="#111" stroke-width="1"/><path d="M1.600 5.700l2.300-1.500v3z" fill="#111"/></svg>
<div class="mi" style="top:39.8px">Derive</div>
<div class="ms" style="top:49.1px"></div>
<svg class="ic" style="top:51.3px" viewBox="0 0 10 10"><path d="M0.400 8.300h6.400l1.200-1.200v1l-1.200 1.200H0.400z" fill="#cfcfcf"/><rect x="0.400" y="1.600" width="6.400" height="6.700" fill="#45aaea"/><path d="M0.400 1.600l1.300-1.200h6.300l-1.200 1.200z" fill="#62bff6"/><path d="M6.800 1.600l1.200-1.200v6.700l-1.200 1.200z" fill="#1b8ad4"/><path d="M9 1.200v6" stroke="#444" stroke-width=".4"/></svg>
<div class="mi" style="top:52.5px">Extrude</div>
<div class="mk" style="left:74.800px;top:53.7px">E</div>
<svg class="ic" style="top:63.8px" viewBox="0 0 10 10"><path d="M1.200 2.300c2-1.700 5.700-1.700 7.500 0" fill="none" stroke="#444" stroke-width=".4"/><path d="M0.300 4.800c1.500-1.700 3-2.300 4.600-2.300s3.300.6 4.600 2.200l-1.300 1.800c-1-1-2.100-1.400-3.300-1.400s-2.300.4-3.300 1.500z" fill="#6cc4fa"/><path d="M0.300 4.800l1.300 1.800v2.500l-1.300-1.700z" fill="#1b8ad4"/><path d="M1.600 6.600c1-1.100 2.100-1.500 3.300-1.500s2.300.4 3.300 1.400v2.200c-1-1-2.100-1.400-3.300-1.400s-2.300.6-3.300 1.800z" fill="#3aa2e6"/><path d="M8.200 6.500l1.300-1.800v2.400l-1.300 1.600z" fill="#f4f4f4" stroke="#999" stroke-width=".4"/></svg>
<div class="mi" style="top:66.0px">Revolve</div>
<svg style="left:75.300px;top:66.1px" width="5" height="6" viewBox="0 0 5 6"><path d="M2.500.400L4.700 2.900H3.500v2.300h-2V2.900H.3z" fill="none" stroke="#444" stroke-width=".5"/></svg><div class="mk" style="left:80.600px;top:65.8px">T</div>
<svg class="ic" style="top:76.2px" viewBox="0 0 10 10"><path d="M0.800 3.200c0-1.700 1.300-2.600 2.700-2.600c1.500 0 2.300.8 2.600 1.800c1.700-.3 3.200.7 3.300 2.500v3.500H6.800V5.800c-1 .3-2.300.2-3-.2c-.4 1-1.300 1.300-2.100 1C.900 6.300.800 5 .800 3.200z" fill="#45aaea"/><path d="M0.800 3.200c.8-1 2-1.400 3.300-1c1.200.4 1.700 1.500 2 2.500" stroke="#62bff6" stroke-width=".8" fill="none"/><rect x="3.800" y="6" width="3.600" height="3.600" fill="#f4f4f4" stroke="#8f8f8f" stroke-width=".5"/></svg>
<div class="mi" style="top:77.4px">Sweep</div>
<svg class="ic" style="top:88.6px" viewBox="0 0 10 10"><path d="M0.500 0.500h8.500v6l-1.500 1.500H2z" fill="#45aaea"/><path d="M0.500 0.500l1.800 1.500h5l1.700-1.500z" fill="#62bff6"/><path d="M0.500 0.500l1.800 1.500v5L.5 6.500z" fill="#1b8ad4"/><circle cx="4.700" cy="7.300" r="2.500" fill="#f6f6f6" stroke="#999" stroke-width=".4"/></svg>
<div class="mi" style="top:89.8px">Loft</div>
<svg class="ic" style="top:101.0px" viewBox="0 0 10 10"><path d="M1.200 9V2.500L2.500.8" fill="none" stroke="#9a9a9a" stroke-width=".6"/><path d="M1.500 8.800h7.800" stroke="#aaa" stroke-width=".6"/><path d="M2 8.300V2.200c2.500 1.200 5.500 3.500 7 6.100z" fill="#45aaea"/><path d="M2 2.200l.8-1c2.500 1.200 5 3.500 6.200 7.100" fill="none" stroke="#62bff6" stroke-width=".7"/></svg>
<div class="mi" style="top:102.2px">Rib</div>
<svg class="ic" style="top:113.2px" viewBox="0 0 10 10"><rect x="0.500" y="0.500" width="9" height="9" fill="#e2e2e2" stroke="#6f6f6f" stroke-width=".6"/><rect x="2" y="2" width="6" height="6" fill="#c9c9c9" stroke="#8a8a8a" stroke-width=".4"/><path d="M4.300 2h1.500v2.300h2.200v1.500H5.800v2.200H4.300V5.800H2V4.300h2.300z" fill="#45aaea"/><path d="M5.800 2v6" stroke="#1b8ad4" stroke-width=".5"/></svg>
<div class="mi" style="top:114.4px">Web</div>
<svg class="ic" style="top:125.7px" viewBox="0 0 10 10"><path d="M0.500 1.200c4.500-1 8.500 2 9.200 8H0.500z" fill="#f0f0f0" stroke="#bdbdbd" stroke-width=".4"/><path d="M0.500 6.500c3 0 5 .8 6 2.700" fill="none" stroke="#c4c4c4" stroke-width=".5"/><path d="M1.500 4l3-2.300 3.600 3.700-2.800 2.300z" fill="#45aaea"/><path d="M2.500 3.300l3.300 3.700M3.600 2.500l3.400 3.700" stroke="#eaf5fd" stroke-width=".55"/></svg>
<div class="mi" style="top:127.9px">Emboss</div>
<div class="ms" style="top:136.6px"></div>
<svg class="ic" style="top:138.7px" viewBox="0 0 10 10"><rect x="0.500" y="0.500" width="9" height="9" rx=".8" fill="#e6e6e6" stroke="#555" stroke-width=".6"/><rect x="1.900" y="1.900" width="6.200" height="6.200" fill="#d0d0d0" stroke="#888" stroke-width=".4"/><circle cx="5" cy="5" r="2.500" fill="#45aaea" stroke="#777" stroke-width=".4"/><path d="M4 3.200c1.700-.4 3 .8 3 2.400-1.500.4-3-.8-3-2.400z" fill="#fff"/></svg>
<div class="mi" style="top:140.9px">Hole</div>
<div class="mk" style="left:74.800px;top:141.1px">H</div>
<svg class="ic" style="top:151.3px" viewBox="0 0 10 10"><rect x="2" y="0.500" width="6.300" height="9" fill="#fdfdfd" stroke="#a9a9a9" stroke-width=".5"/><path d="M0.600 3.600L9.800 1.700M0.600 5.200L9.800 3.300M0.600 6.800L9.800 4.900M0.600 8.400L9.800 6.500" stroke="#45aaea" stroke-width=".75" fill="none"/><path d="M1.200 3.500l7.600 1.100M1.200 5.100l7.600 1.100M1.200 6.700l7.600 1.100" stroke="#6cc4fa" stroke-width=".45" fill="none"/></svg>
<div class="mi" style="top:152.5px">Thread</div>
<div class="ms" style="top:162.5px"></div>
<div class="abs" style="left:1.300px;top:163.5px;width:99.800px;height:11.700px;background:#d6d6d6"></div>
<svg style="left:93.400px;top:166.6px" width="2" height="7" viewBox="0 0 2 7"><circle cx="1" cy="1" r=".75" fill="#333"/><circle cx="1" cy="3.400" r=".75" fill="#333"/><circle cx="1" cy="5.800" r=".75" fill="#333"/></svg>
<svg class="ic" style="top:164.2px" viewBox="0 0 10 10"><rect x="0.400" y="2.300" width="7.200" height="7.200" fill="#45aaea"/><path d="M0.400 2.300l1.900-1.900h7.200l-1.900 1.900z" fill="#62bff6"/><path d="M7.600 2.300l1.900-1.900v7.200l-1.900 1.900z" fill="#1b8ad4"/></svg>
<div class="mi" style="top:165.4px">Box</div>
<svg class="ic" style="top:176.7px" viewBox="0 0 10 10"><path d="M0.800 2.300v5.600c0 1 1.900 1.700 4.200 1.700s4.200-.7 4.200-1.700V2.300z" fill="#45aaea"/><ellipse cx="5" cy="2.300" rx="4.200" ry="1.700" fill="#62bff6"/></svg>
<div class="mi" style="top:178.9px">Cylinder</div>
<svg class="ic" style="top:189.0px" viewBox="0 0 10 10"><defs><radialGradient id="sphg" cx=".42" cy=".35" r=".65"><stop offset="0" stop-color="#6cc4fa"/><stop offset=".7" stop-color="#4bb0ef"/><stop offset="1" stop-color="#2b97de"/></radialGradient></defs><circle cx="5" cy="5" r="4.600" fill="url(#sphg)"/></svg>
<div class="mi" style="top:190.2px">Sphere</div>
<svg class="ic" style="top:201.5px" viewBox="0 0 10 10"><ellipse cx="5" cy="5" rx="4.800" ry="3.400" fill="#45aaea"/><path d="M0.300 4.600c.5-1.800 2.500-3 4.700-3s4.200 1.200 4.700 3c-.8-1.200-2.600-2-4.700-2s-3.900.8-4.700 2z" fill="#62bff6"/><ellipse cx="5" cy="4.700" rx="1.500" ry=".9" fill="#fff"/></svg>
<div class="mi" style="top:202.7px">Torus</div>
<svg class="ic" style="top:213.8px" viewBox="0 0 10 10"><path d="M8.900 .9L2.200 2.300 8.900 4.300 2.200 5.500 8.900 7.500 2.200 8.600" fill="none" stroke="#45aaea" stroke-width="1.500" stroke-linejoin="round" stroke-linecap="round"/><path d="M2.200 2.300L8.900 4.300M2.200 5.500L8.900 7.500" fill="none" stroke="#2d97de" stroke-width="1.300" stroke-linecap="round"/></svg>
<div class="mi" style="top:216.0px">Coil</div>
<svg class="ic" style="top:226.2px" viewBox="0 0 10 10"><path d="M1.300 5.200L7.500 2.500c1-.4 1.900 0 2.200.8c.3.800 0 1.700-1 2.100L2.500 8.100z" fill="#45aaea"/><path d="M1.300 5.200L7.500 2.500c1-.4 1.900 0 2.200.8" fill="none" stroke="#62bff6" stroke-width=".8"/><ellipse cx="1.900" cy="6.700" rx="1.400" ry="1.600" transform="rotate(-25 1.900 6.700)" fill="#1b8ad4"/></svg>
<div class="mi" style="top:227.5px">Pipe</div>
<div class="ms" style="top:237.1px"></div>
<div class="mi" style="top:240.5px">Pattern</div>
<svg style="left:93.800px;top:241.1px" width="5" height="6.200" viewBox="0 0 5 6.200"><path d="M0.100 0.100L4.500 3.100 0.100 6.100z" fill="#111"/></svg>
<svg class="ic" style="top:251.7px" viewBox="0 0 10 10"><path d="M4.800.5L.5 9.500h4.300z" fill="#f2f2f2" stroke="#9a9a9a" stroke-width=".5"/><path d="M5.300.5l4.300 9H5.300z" fill="#45aaea"/><path d="M5.050 0v10" stroke="#777" stroke-width=".4"/></svg>
<div class="mi" style="top:254.0px">Mirror</div>
<div class="ms" style="top:262.5px"></div>
<svg class="ic" style="top:264.6px" viewBox="0 0 10 10"><path d="M0.300 5.300L4.300 1.900l5.400 1.200-4.200 3.700z" fill="#fbfbfb" stroke="#8f8f8f" stroke-width=".4"/><path d="M0.300 5.300l5.200 1.500 4.200-3.700v2L5.500 9 .3 7.400z" fill="#45aaea"/><path d="M5.500 6.800l4.200-3.700v2L5.500 9z" fill="#1b8ad4"/></svg>
<div class="mi" style="top:265.9px">Thicken</div>
<svg class="ic" style="top:276.9px" viewBox="0 0 10 10"><rect x="4.600" y="0.400" width="5.200" height="5.200" fill="#f08a4a"/><circle cx="4.300" cy="6" r="3.900" fill="#f08a4a"/><path d="M4.300 6V2.600A3.400 3.400 0 0 1 7.700 6z" fill="#62b8f2"/></svg>
<div class="mi" style="top:279.1px">Boundary Fill</div>
<div class="ms" style="top:288.0px"></div>
<svg class="ic" style="top:290.0px" viewBox="0 0 10 10"><path d="M1 3.300l1.800-2h4.500l1.700 1.700v4.300L7.300 9.300H1z" fill="#dcdcdc" stroke="#8f8f8f" stroke-width=".5"/><path d="M1 3.300h6.300v6M7.300 3.300l1.700-.4" fill="none" stroke="#8f8f8f" stroke-width=".4"/><g transform="translate(8 2.200)"><path d="M0-2.600L.5-1.200 1.800-1.800 1.200-.5 2.600 0 1.200.5 1.800 1.800.5 1.200 0 2.600-.5 1.200-1.800 1.800-1.200.5-2.600 0-1.200-.5-1.800-1.800-.5-1.200z" fill="#ff9a0a"/><circle r="1.300" fill="#ffa50e"/></g></svg>
<div class="mi" style="top:291.2px">Create Base Feature</div>
<div class="mi" style="top:303.9px">Create PCB</div>
<svg style="left:93.800px;top:304.5px" width="5" height="6.200" viewBox="0 0 5 6.200"><path d="M0.100 0.100L4.500 3.100 0.100 6.100z" fill="#111"/></svg>
</div>
<!-- TOOLTIP -->
<div class="abs" id="tip">
<div class="tt" style="top:18.300px">Creates a solid box.</div>
<div class="tt" style="top:37.300px">Select a plane, draw a rectangle then specify</div>
<div class="tt" style="top:46.100px">the height of the box.</div>
<div class="tt" style="top:196.300px">Press</div>
<svg style="left:33.800px;top:196.600px" width="5.600" height="5.600" viewBox="0 0 6 6"><path d="M2 2V1.200a.8 .8 0 1 0 -.8 .8H4.800a.8 .8 0 1 0 -.8 -.8V4.800a.8 .8 0 1 0 .8 -.8H1.200a.8 .8 0 1 0 .8 .8z" fill="none" stroke="#fff" stroke-width=".85"/></svg>
<div class="tt" style="top:196.300px;left:40px">/ for more help.</div>
</div>
<svg style="left:184px;top:232px" width="199" height="206" viewBox="184 232 199 206">
<defs>
<linearGradient id="ctop" x1="0" y1="0" x2="1" y2="0.300"><stop offset="0" stop-color="#6a665d"/><stop offset=".65" stop-color="#87837a"/><stop offset="1" stop-color="#7c786f"/></linearGradient>
<linearGradient id="cleft" x1="0" y1="0" x2="0.300" y2="1"><stop offset="0" stop-color="#6f6b62"/><stop offset="1" stop-color="#615d54"/></linearGradient>
<linearGradient id="cright" x1="0" y1="0" x2="1" y2="1"><stop offset="0" stop-color="#524e46"/><stop offset="1" stop-color="#6d695f"/></linearGradient>
</defs>
<path d="M281.500 302.200L331.700 325.800 281.500 353.500 231 325.800z" fill="url(#ctop)"/>
<path d="M231 325.800L281.500 353.500V410.400L232.300 381z" fill="url(#cleft)"/>
<path d="M281.500 353.500L331.700 325.800 328.400 381.700 281.500 410.400z" fill="url(#cright)"/>
<path d="M281.500 302.200L331.700 325.800 328.400 381.700 281.500 410.400 232.300 381 231 325.800z" fill="none" stroke="#3f3c36" stroke-width=".6"/>
<path d="M231 325.800L281.500 353.500 331.700 325.800" fill="none" stroke="#4a463f" stroke-width=".6"/>
<path d="M281.500 353.500V410.400" stroke="#8d897f" stroke-width=".6"/>
<path d="M281.500 353.500L232.300 381" stroke="#837f75" stroke-width=".5"/>
<path d="M281.500 353.500L328.400 381.700" stroke="#4d6c9f" stroke-width=".8"/>
<path d="M281.500 326v27" stroke="#a9a59b" stroke-width=".6"/>
<!-- blue up arrow -->
<path d="M281.200 316.300l3.400 3.300h-2v3.400h-2.800v-3.400h-2z" fill="#1a8fd6" stroke="#e9f3fa" stroke-width=".7" stroke-linejoin="round"/>
<!-- white arrows -->
<g fill="none" stroke="#f2f2f2" stroke-width=".9" stroke-linecap="round" stroke-linejoin="round">
<path d="M256 341.500l-4.300-2.600M254.200 337.300l-2.700 1.500.7 2.900"/>
<path d="M306 341.500l4.300-2.600M307.800 337.300l2.700 1.500-.7 2.900"/>
<path d="M254.500 370l-4.600 2.400M251.800 369.800l-2.300 2.700 3.300 1.100"/>
<path d="M307.500 370l4.600 2.400M310.200 369.800l2.300 2.700-3.300 1.100"/>
</g>
<text x="275.300" y="353" font-family="Liberation Sans, sans-serif" font-size="3.600" fill="#cfcbc2">100.00</text>
<rect x="280.900" y="378.500" width="1.200" height="1.600" fill="#9f9b91"/>
</svg>
</div></body>
</html>
